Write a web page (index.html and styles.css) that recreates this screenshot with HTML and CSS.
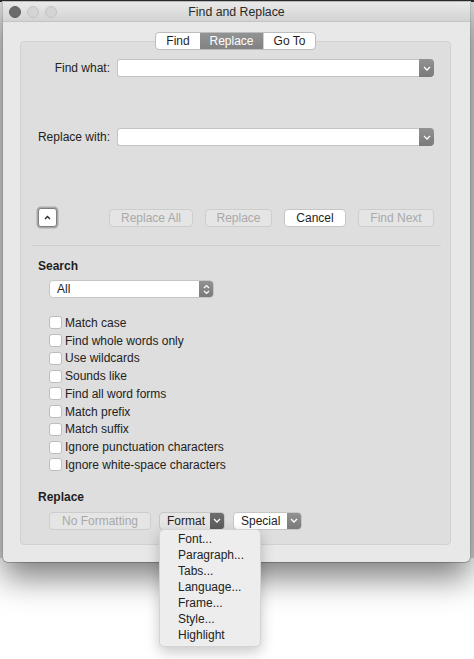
FILE: index.html
```html
<!DOCTYPE html>
<html lang="en">
  <head>
    <meta charset="UTF-8" />
    <title>Find and Replace</title>
    <link rel="stylesheet" href="styles.css">
  </head>
  <body>
    <div class="topbar"></div>
    <div class="desk">
      <div class="window">
        <div class="titlebar">
          <div class="lights">
            <span class="light close"></span>
            <span class="light"></span>
            <span class="light"></span>
          </div>
          <div class="title">Find and Replace</div>
        </div>

        <div class="content">
          <div class="tabs">
            <span class="tab">Find</span>
            <span class="tab selected">Replace</span>
            <span class="tab">Go To</span>
          </div>

          <div class="panel">
            <div class="field-row">
              <label class="field-label">Find what:</label>
              <div class="combo">
                <input type="text" class="combo-input" />
                <span class="combo-arrow">
                  <svg width="8" height="5" viewBox="0 0 8 5"><path d="M1 1l3 3 3-3" fill="none" stroke="#fff" stroke-width="1.3"/></svg>
                </span>
              </div>
            </div>

            <div class="field-row replace-row">
              <label class="field-label">Replace with:</label>
              <div class="combo">
                <input type="text" class="combo-input" />
                <span class="combo-arrow">
                  <svg width="8" height="5" viewBox="0 0 8 5"><path d="M1 1l3 3 3-3" fill="none" stroke="#fff" stroke-width="1.3"/></svg>
                </span>
              </div>
            </div>

            <div class="actions">
              <button class="disclosure">
                <svg width="7" height="5" viewBox="0 0 7 5"><path d="M1 4l2.5-2.5L6 4" fill="none" stroke="#222" stroke-width="1.3"/></svg>
              </button>
              <div class="action-buttons">
                <button class="btn disabled w-all">Replace All</button>
                <button class="btn disabled w-rep">Replace</button>
                <button class="btn w-cancel">Cancel</button>
                <button class="btn disabled w-next">Find Next</button>
              </div>
            </div>

            <div class="separator"></div>

            <div class="group-title">Search</div>
            <div class="popup">
              <span class="popup-value">All</span>
              <span class="stepper">
                <svg width="7" height="11" viewBox="0 0 7 11"><path d="M1 4l2.5-2.5L6 4M1 7l2.5 2.5L6 7" fill="none" stroke="#fff" stroke-width="1.2"/></svg>
              </span>
            </div>

            <ul class="options">
              <li><span class="check"></span>Match case</li>
              <li><span class="check"></span>Find whole words only</li>
              <li><span class="check"></span>Use wildcards</li>
              <li><span class="check"></span>Sounds like</li>
              <li><span class="check"></span>Find all word forms</li>
              <li><span class="check"></span>Match prefix</li>
              <li><span class="check"></span>Match suffix</li>
              <li><span class="check"></span>Ignore punctuation characters</li>
              <li><span class="check"></span>Ignore white-space characters</li>
            </ul>

            <div class="group-title replace-title">Replace</div>
            <div class="replace-buttons">
              <button class="btn disabled w-nofmt">No Formatting</button>
              <div class="menu-wrap">
                <div class="popbtn open">
                  <span class="popbtn-label">Format</span>
                  <span class="popbtn-arrow dark">
                    <svg width="8" height="5" viewBox="0 0 8 5"><path d="M1 1l3 3 3-3" fill="none" stroke="#fff" stroke-width="1.3"/></svg>
                  </span>
                </div>
                <ul class="menu">
                  <li>Font...</li>
                  <li>Paragraph...</li>
                  <li>Tabs...</li>
                  <li>Language...</li>
                  <li>Frame...</li>
                  <li>Style...</li>
                  <li>Highlight</li>
                </ul>
              </div>
              <div class="popbtn special">
                <span class="popbtn-label">Special</span>
                <span class="popbtn-arrow">
                  <svg width="8" height="5" viewBox="0 0 8 5"><path d="M1 1l3 3 3-3" fill="none" stroke="#fff" stroke-width="1.3"/></svg>
                </span>
              </div>
            </div>
          </div>
        </div>
      </div>
    </div>
  </body>
</html>
```

FILE: styles.css
```css
* {
  box-sizing: border-box;
}
body {
  margin: 0;
  background: #fff;
  font-family: "Liberation Sans", Arial, sans-serif;
  font-size: 12px;
  color: #222;
}
.topbar {
  height: 2px;
  background: #2b2b2b;
}
.desk {
  height: 657px;
  background: linear-gradient(#d6d6d6, #d6d6d6) no-repeat 0 0 / 100% 556px;
}
.window {
  margin-left: 3px;
  width: 467px;
  background: #e8e8e8;
  border-radius: 0 0 5px 5px;
  box-shadow: 0 16px 32px rgba(0, 0, 0, 0.5), 0 0 0 1px #c6c6c6;
}

/* title bar */
.titlebar {
  height: 20px;
  display: flex;
  align-items: center;
  background: linear-gradient(#e9e9e9, #d3d3d3);
  border-bottom: 1px solid #c4c4c4;
  position: relative;
}
.lights {
  display: flex;
  gap: 6px;
  padding-left: 6px;
}
.light {
  width: 12px;
  height: 12px;
  border-radius: 50%;
  background: #d4d4d4;
  border: 1px solid #c3c3c3;
}
.light.close {
  background: #6b6b6b;
  border-color: #606060;
}
.title {
  position: absolute;
  left: 0;
  right: 0;
  text-align: center;
  font-size: 12.3px;
  color: #2a2a2a;
}

.content {
  padding: 10px 19px 17px 17px;
}

/* segmented control */
.tabs {
  display: flex;
  width: 161px;
  margin: 0 auto -9px;
  height: 18px;
  border: 1px solid #bcbcbc;
  border-radius: 4px;
  overflow: hidden;
  position: relative;
  z-index: 1;
  background: #fff;
}
.tab {
  display: flex;
  align-items: center;
  justify-content: center;
  color: #1f1f1f;
}
.tab:nth-child(1) {
  width: 44px;
}
.tab:nth-child(2) {
  width: 63px;
}
.tab:nth-child(3) {
  flex: 1;
  border-left: 1px solid #d0d0d0;
}
.tab.selected {
  background: linear-gradient(#939393, #828282);
  color: #fff;
}

.panel {
  background: #dedede;
  border: 1px solid #d1d1d1;
  border-radius: 4px;
  padding: 17px 16px 14px 0;
}

.field-row {
  display: flex;
  align-items: center;
}
.replace-row {
  margin-top: 51px;
}
.field-label {
  box-sizing: content-box;
  width: 89px;
  padding-right: 7px;
  text-align: right;
  flex: none;
}
.combo {
  flex: 1;
  display: flex;
  height: 18px;
}
.combo-input {
  flex: 1;
  border: 1px solid #c4c4c4;
  border-right: none;
  border-radius: 3px 0 0 3px;
  background: #fff;
  margin: 0;
  padding: 0 4px;
  height: 18px;
  outline: none;
}
.combo-arrow,
.popbtn-arrow,
.stepper {
  width: 15px;
  flex: none;
  display: flex;
  align-items: center;
  justify-content: center;
  background: linear-gradient(#929292, #7a7a7a);
  border-radius: 0 4px 4px 0;
}

/* bottom buttons of the top section */
.actions {
  display: flex;
  align-items: center;
  margin-top: 62px;
  padding-left: 17px;
}
.disclosure {
  width: 19px;
  height: 19px;
  margin: 0;
  padding: 0;
  display: flex;
  align-items: center;
  justify-content: center;
  background: #fff;
  border: 1px solid #7e7e7e;
  border-radius: 3px;
  box-shadow: 0 0 0 1.5px #a9a9a9;
}
.action-buttons {
  display: flex;
  gap: 12px;
  margin-left: auto;
}
.btn {
  height: 18px;
  margin: 0;
  padding: 0;
  font-family: inherit;
  font-size: 12px;
  background: #fff;
  color: #1f1f1f;
  border: 1px solid #c6c6c6;
  border-radius: 4px;
}
.btn.disabled {
  background: #e5e5e5;
  color: #a9a9a9;
  border-color: #cdcdcd;
}
.w-all {
  width: 84px;
}
.w-rep {
  width: 67px;
}
.w-cancel {
  width: 62px;
}
.w-next {
  width: 76px;
}

.separator {
  height: 1px;
  background: #cdcdcd;
  margin: 18px 0 0 11px;
  width: 409px;
}

.group-title {
  font-weight: 700;
  color: #1f1f1f;
  margin: 13px 0 0 17px;
  line-height: 14px;
}

.popup {
  display: flex;
  width: 165px;
  height: 18px;
  margin: 7px 0 0 28px;
  background: #fff;
  border: 1px solid #c6c6c6;
  border-radius: 4px;
  overflow: hidden;
}
.popup-value {
  flex: 1;
  padding-left: 7px;
  display: flex;
  align-items: center;
}
.stepper {
  width: 14px;
  border-radius: 0;
}

.options {
  list-style: none;
  margin: 16px 0 0 28px;
  padding: 0;
}
.options li {
  display: flex;
  align-items: center;
  height: 17.75px;
}
.check {
  width: 13px;
  height: 13px;
  background: #fff;
  border: 1px solid #bdbdbd;
  border-radius: 3px;
  margin-right: 3px;
  flex: none;
}

.replace-title {
  margin-top: 16px;
}

.replace-buttons {
  display: flex;
  align-items: center;
  gap: 8px;
  margin: 8px 0 0 28px;
}
.w-nofmt {
  width: 102px;
}
.menu-wrap {
  position: relative;
}
.popbtn {
  display: flex;
  height: 18px;
  border: 1px solid #c6c6c6;
  border-radius: 4px;
  background: #fff;
  overflow: hidden;
}
.popbtn.open {
  width: 66px;
  background: #e6e6e6;
}
.popbtn.special {
  width: 69px;
}
.popbtn-label {
  flex: 1;
  display: flex;
  align-items: center;
  padding-left: 7px;
}
.popbtn-arrow {
  width: 14px;
  border-radius: 0;
}
.popbtn-arrow.dark {
  background: linear-gradient(#6e6e6e, #5c5c5c);
}

/* format dropdown */
.menu {
  position: absolute;
  left: 0;
  top: 17px;
  width: 102px;
  margin: 0;
  padding: 1px 0 3px;
  list-style: none;
  background: #ededed;
  border: 1px solid #d3d3d3;
  border-radius: 5px;
  box-shadow: 0 5px 14px rgba(0, 0, 0, 0.22);
  z-index: 2;
}
.menu li {
  height: 16px;
  line-height: 16px;
  padding-left: 18px;
}
```
